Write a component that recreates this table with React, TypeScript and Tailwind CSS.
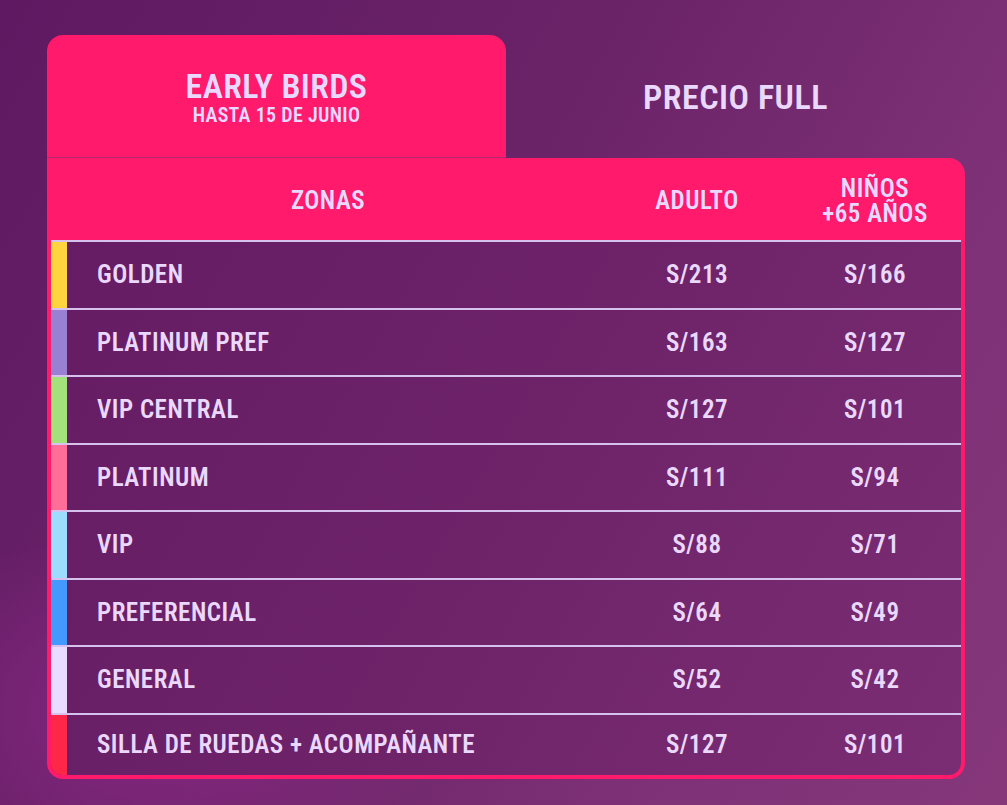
const rows = [
  { name: "GOLDEN", color: "bg-[#ffd43f]", adult: "S/213", kid: "S/166" },
  { name: "PLATINUM PREF", color: "bg-[#9a80d2]", adult: "S/163", kid: "S/127" },
  { name: "VIP CENTRAL", color: "bg-[#a3e27b]", adult: "S/127", kid: "S/101" },
  { name: "PLATINUM", color: "bg-[#ff6d99]", adult: "S/111", kid: "S/94" },
  { name: "VIP", color: "bg-[#9ddbff]", adult: "S/88", kid: "S/71" },
  { name: "PREFERENCIAL", color: "bg-[#4499ff]", adult: "S/64", kid: "S/49" },
  { name: "GENERAL", color: "bg-[#e9dcff]", adult: "S/52", kid: "S/42" },
  { name: "SILLA DE RUEDAS + ACOMPAÑANTE", color: "bg-[#ff2748]", adult: "S/127", kid: "S/101" },
];

export default function App() {
  return (
    <div className="relative w-[1007px] h-[805px] overflow-hidden bg-[linear-gradient(120deg,#5e1962_0%,#6c2468_45%,#7e3177_75%,#85377a_100%)] font-['Roboto_Condensed','Liberation_Sans_Narrow',sans-serif] text-[#ead8ff]">
      <div className="pointer-events-none absolute -left-[120px] top-[520px] w-[560px] h-[380px] rounded-full bg-[radial-gradient(closest-side,rgba(155,42,150,0.6),rgba(155,42,150,0))]" />
      <div className="relative pt-[35px] pl-[47px] w-[965px]">
        <div className="flex h-[123px]">
          <div className="w-[459px] bg-[#ff1a6b] rounded-t-[16px] border-b border-[#b42a72] flex flex-col items-center justify-center">
            <div className="text-[34px] font-semibold leading-[38px] tracking-[0.4px]">EARLY BIRDS</div>
            <div className="text-[20px] font-semibold leading-[20px] tracking-[0.3px]">HASTA 15 DE JUNIO</div>
          </div>
          <div className="flex-1 flex items-center justify-center">
            <div className="text-[34px] font-semibold tracking-[0.5px] mt-[1px]">PRECIO FULL</div>
          </div>
        </div>
        <div className="w-[918px] bg-[#ff1a6b] rounded-tr-[16px] rounded-b-[16px] px-[4px] pb-[4px]">
          <div className="grid grid-cols-[554px_184px_1fr] h-[82px] pt-[3px] items-center text-[25px] font-semibold tracking-[0.5px]">
            <div className="text-center">ZONAS</div>
            <div className="text-center">ADULTO</div>
            <div className="flex flex-col items-center">
              <div className="leading-[25px]">NIÑOS</div>
              <div className="leading-[25px]">+65 AÑOS</div>
            </div>
          </div>
          <div className="bg-[linear-gradient(120deg,#651c63_0%,#6e2369_50%,#7b2d73_100%)] rounded-bl-[12px] rounded-br-[12px] overflow-hidden">
            {rows.map((r, i) => (
              <div
                key={r.name}
                className={`grid grid-cols-[16px_538px_184px_1fr] border-t-2 border-[#d7c1ef] ${i === rows.length - 1 ? "h-[62px]" : "h-[67.5px]"}`}
              >
                <div className={r.color} />
                <div className="flex items-center pl-[30px] text-[25px] font-semibold tracking-[0.5px]">{r.name}</div>
                <div className="flex items-center justify-center text-[25px] font-semibold tracking-[0.5px]">{r.adult}</div>
                <div className="flex items-center justify-center text-[25px] font-semibold tracking-[0.5px]">{r.kid}</div>
              </div>
            ))}
          </div>
        </div>
      </div>
    </div>
  );
}
